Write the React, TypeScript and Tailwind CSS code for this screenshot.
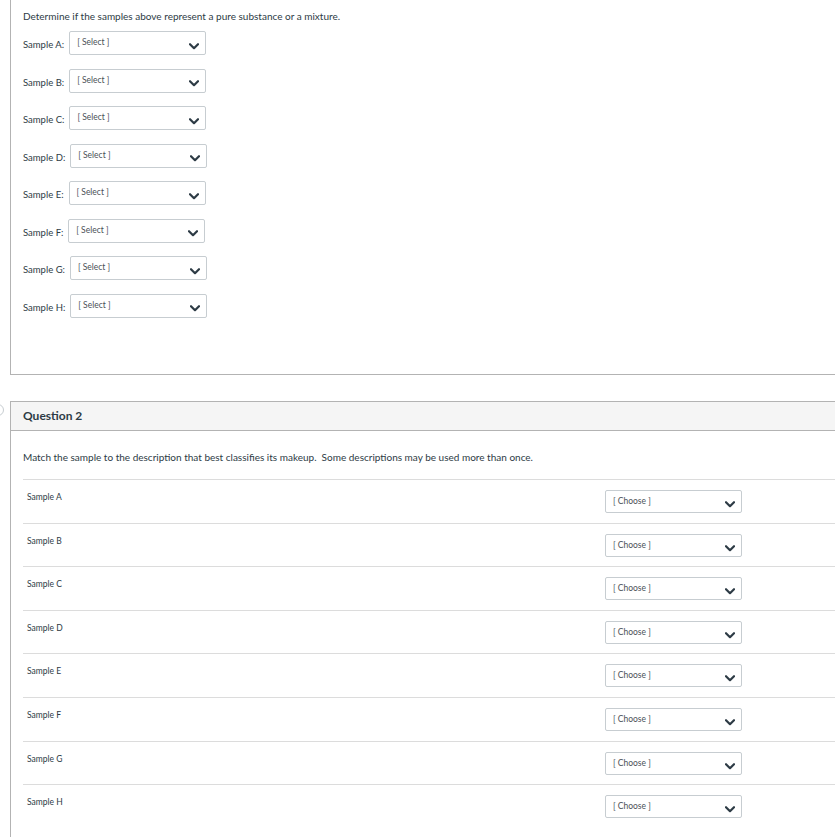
import React from 'react';

const font = { fontFamily: 'Lato, "Noto Sans", sans-serif' };

const Chevron = () => (
  <svg width="10" height="7" viewBox="0 0 10 7" className="shrink-0">
    <path d="M1 1.2 L5 5.2 L9 1.2" fill="none" stroke="#2d3b45" strokeWidth="2.2" strokeLinecap="round" strokeLinejoin="round" />
  </svg>
);

const SelectBox = ({ text, className = '' }: { text: string; className?: string }) => (
  <div className={`flex items-start justify-between border border-[#c7cdd1] rounded-[2px] bg-white ${className}`}>
    <span className="text-[8.5px] leading-none text-[#4a5056] whitespace-pre">{text}</span>
    <div className="self-center">
      <Chevron />
    </div>
  </div>
);

const samples = ['A', 'B', 'C', 'D', 'E', 'F', 'G', 'H'];

export default function App() {
  return (
    <div className="w-[835px] h-[837px] overflow-hidden bg-white text-[#2d3b45]" style={font}>
      {/* question 1 tail */}
      <div className="ml-[10px] h-[375px] border-l border-b border-[#b3b3b3] pl-[12px] pt-[10px]">
        <p className="text-[10px] leading-[12px]">
          Determine if the samples above represent a pure substance or a mixture.
        </p>
        <div className="mt-[9px] flex flex-col gap-[13.5px]">
          {samples.map((s) => (
            <div key={s} className="flex items-center gap-[5px] h-[24px]">
              <span className="text-[9.5px] leading-none pt-[4px]">Sample {s}:</span>
              <SelectBox text="[ Select ]" className="w-[137px] h-[24px] pl-[7px] pt-[6px] pr-[6px]" />
            </div>
          ))}
        </div>
      </div>

      {/* question 2 */}
      <div className="relative mt-[26px]">
        <div className="absolute left-[-8px] top-[3px] w-[12px] h-[12px] rounded-full border border-[#c7cdd1]" />
        <div className="ml-[10px] border-l border-[#b3b3b3] h-[436px]">
          <div className="h-[30px] bg-[#f5f5f5] border-t border-b border-[#b3b3b3] flex items-center pl-[12px]">
            <span className="text-[12px] font-bold text-[#2d3b45]">Question 2</span>
          </div>
          <div className="pl-[12px]">
            <p className="mt-[20px] text-[10px] leading-[12px]">
              Match the sample to the description that best classifies its makeup.&nbsp; Some descriptions may be used more than once.
            </p>
            <div className="mt-[16px]">
              {samples.map((s) => (
                <div key={s} className="h-[43.6px] border-t border-[#dcdcdc] flex items-start">
                  <span className="ml-[4px] mt-[12px] w-[578px] text-[8.5px] leading-[10px]">Sample {s}</span>
                  <SelectBox text="[ Choose ]" className="mt-[10px] w-[137px] h-[23px] pl-[7px] pt-[6px] pr-[6px]" />
                </div>
              ))}
            </div>
          </div>
        </div>
      </div>
    </div>
  );
}
